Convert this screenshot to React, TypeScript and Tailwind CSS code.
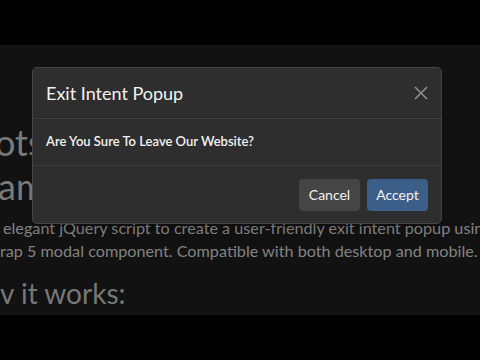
export default function App() {
    return (
        <div className="w-[480px] h-[360px] bg-black overflow-hidden font-['Lato','Liberation_Sans',sans-serif]">
            <div className="h-[45px] bg-black"></div>
            <div className="relative h-[270px] bg-[#121212] overflow-hidden">
                {/* page behind the backdrop */}
                <div className="pt-[75px] whitespace-nowrap">
                    <h1 className="-ml-[5px] text-[36px] leading-[44px] text-[#7a7a7a]">
                        <div>ots</div>
                        <div className="ml-[3px]">am</div>
                    </h1>
                    <p className="mt-[8px] text-[16.2px] leading-[23px] text-[#838383]">
                        <span className="block pl-[3px]">
                            elegant jQuery script to create a user-friendly exit intent popup using
                        </span>
                        <span className="block">
                            rap 5 modal component. Compatible with both desktop and mobile.
                        </span>
                    </p>
                    <h2 className="mt-[13px] text-[28px] leading-[36px] text-[#777]">
                        v it works:
                    </h2>
                </div>

                {/* modal */}
                <div className="absolute left-[32px] top-[22px] w-[410px] rounded-[5px] border border-[#444] bg-[#2e2e2e] text-[#f2f2f2] shadow-lg">
                    <div className="flex h-[51px] items-center justify-between border-b border-[#3c3c3c] pl-[13px] pr-[12px]">
                        <span className="text-[18px]">Exit Intent Popup</span>
                        <svg width="16" height="16" viewBox="0 0 16 16" className="text-[#8c8c8c]">
                            <path d="M2 2L14 14M14 2L2 14" stroke="currentColor" strokeWidth="1.6" />
                        </svg>
                    </div>
                    <div className="flex h-[47px] items-center border-b border-[#3c3c3c] pl-[13px]">
                        <span className="text-[13px] font-semibold">Are You Sure To Leave Our Website?</span>
                    </div>
                    <div className="flex h-[57px] items-center justify-end gap-[7px] pr-[13px]">
                        <button className="h-[32px] w-[61px] rounded-[4px] bg-[#454545] text-[14px] text-[#f2f2f2]">
                            Cancel
                        </button>
                        <button className="h-[32px] w-[61px] rounded-[4px] bg-[#3c5f89] text-[14px] text-[#f2f2f2]">
                            Accept
                        </button>
                    </div>
                </div>
            </div>
            <div className="h-[45px] bg-black"></div>
        </div>
    );
}
